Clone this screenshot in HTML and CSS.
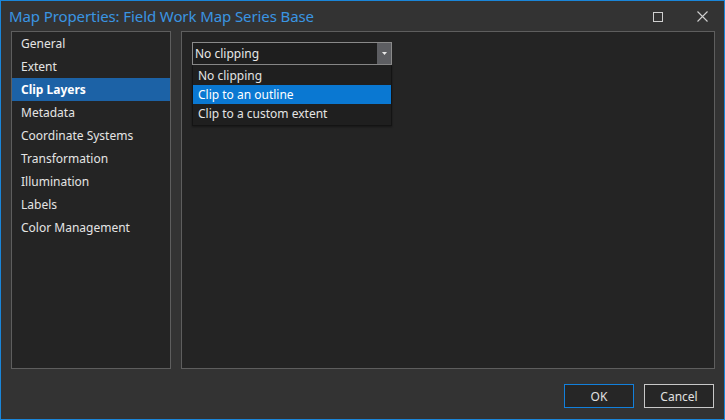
FILE: index.html
```html
<!DOCTYPE html>
<html lang="en">
<head>
  <meta charset="UTF-8">
  <title>Map Properties</title>
  <link rel="stylesheet" href="styles.css">
</head>
<body>
  <div class="dialog">
    <div class="titlebar">
      <span class="title">Map Properties: Field Work Map Series Base</span>
      <div class="window-buttons">
        <svg width="10" height="10" viewBox="0 0 10 10"><rect x="0.5" y="0.5" width="9" height="9" fill="none" stroke="#d0d0d0"/></svg>
        <svg width="11" height="11" viewBox="0 0 11 11"><path d="M0.5 0.5L10.5 10.5M10.5 0.5L0.5 10.5" stroke="#d0d0d0" stroke-width="1.1"/></svg>
      </div>
    </div>

    <div class="content">
      <ul class="sidebar">
        <li>General</li>
        <li>Extent</li>
        <li class="selected">Clip Layers</li>
        <li>Metadata</li>
        <li>Coordinate Systems</li>
        <li>Transformation</li>
        <li>Illumination</li>
        <li>Labels</li>
        <li>Color Management</li>
      </ul>

      <div class="panel">
        <div class="combo">
          <div class="combo-box">
            <span class="combo-value">No clipping</span>
            <span class="combo-arrow">
              <svg width="5" height="3" viewBox="0 0 5 3"><path d="M0 0H5L2.5 3Z" fill="#e8e8e8"/></svg>
            </span>
          </div>
          <ul class="combo-list">
            <li>No clipping</li>
            <li class="highlight">Clip to an outline</li>
            <li>Clip to a custom extent</li>
          </ul>
        </div>
      </div>
    </div>

    <div class="footer">
      <button class="btn btn-default">OK</button>
      <button class="btn">Cancel</button>
    </div>
  </div>
</body>
</html>
```

FILE: styles.css
```css
* {
  box-sizing: border-box;
}
body {
  margin: 0;
  font-family: 'Noto Sans', 'Open Sans', sans-serif;
  background-color: #333333;
}
.dialog {
  width: 725px;
  height: 420px;
  border: 1px solid #1a86d9;
  background-color: #333333;
  display: flex;
  flex-direction: column;
}
.titlebar {
  height: 30px;
  display: flex;
  align-items: center;
  justify-content: space-between;
  padding: 0 16px 0 8px;
}
.title {
  color: #3a95e2;
  font-size: 15px;
  letter-spacing: -0.1px;
}
.window-buttons {
  display: flex;
  align-items: center;
  gap: 34px;
  margin-top: 1px;
}
.content {
  display: flex;
  gap: 10px;
  padding: 0 9px 0 10px;
  height: 338px;
}
.sidebar {
  list-style: none;
  margin: 0;
  padding: 0;
  width: 160px;
  border: 1px solid #5e5e5e;
  background-color: #242424;
}
.sidebar li {
  height: 23px;
  line-height: 23px;
  padding-left: 9px;
  font-size: 12px;
  color: #e4e4e4;
}
.sidebar li.selected {
  background-color: #1c62a6;
  color: #ffffff;
  font-weight: bold;
}
.panel {
  flex: 1;
  border: 1px solid #5e5e5e;
  background-color: #242424;
  padding: 10px;
}
.combo {
  width: 200px;
}
.combo-box {
  height: 23px;
  border: 1px solid #8a8a8a;
  display: flex;
  background-color: #1e1e1e;
}
.combo-value {
  flex: 1;
  font-size: 12px;
  line-height: 21px;
  padding-left: 2px;
  color: #e8e8e8;
}
.combo-arrow {
  width: 14px;
  background-color: #5d5e62;
  display: flex;
  align-items: center;
  justify-content: center;
}
.combo-list {
  list-style: none;
  margin: 0;
  padding: 1px 0 2px;
  background-color: #1f1f1f;
  border: 1px solid #141414;
  border-top: none;
  box-shadow: 0 1px 2px rgba(0,0,0,0.4);
}
.combo-list li {
  height: 19px;
  line-height: 19px;
  padding-left: 5px;
  font-size: 12px;
  color: #e4e4e4;
}
.combo-list li.highlight {
  background-color: #0a78d2;
  color: #ffffff;
}
.footer {
  flex: 1;
  display: flex;
  justify-content: flex-end;
  gap: 10px;
  padding: 15px 10px 0 0;
}
.btn {
  width: 70px;
  height: 24px;
  background-color: #262626;
  border: 1px solid #c8c8c8;
  color: #e0e0e0;
  font-family: 'Noto Sans', 'Open Sans', sans-serif;
  font-size: 12px;
  padding: 0;
}
.btn-default {
  border-color: #1280dc;
}
```
